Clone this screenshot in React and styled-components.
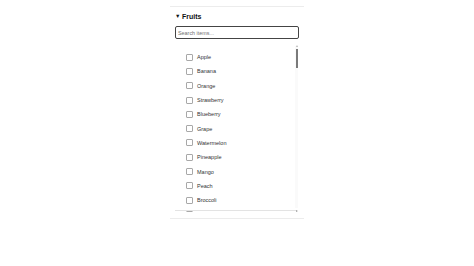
import React from "react";
import styled, { createGlobalStyle } from "styled-components";

const Global = createGlobalStyle`
  html, body { margin: 0; padding: 0; background: #fff; }
  body { font-family: "Liberation Sans", Arial, sans-serif; }
`;

const Page = styled.div`
  display: flex;
  justify-content: center;
  padding-top: 6px;
`;

const Panel = styled.section`
  width: 134px;
  box-sizing: border-box;
  border-top: 1px solid #ececec;
  border-bottom: 1px solid #ececec;
  padding: 4px 5px 6px 5px;
  display: flex;
  flex-direction: column;
`;

const Header = styled.div`
  font-weight: bold;
  font-size: 7px;
  color: #111;
  display: flex;
  align-items: center;
  gap: 1.5px;
  height: 10px;
`;

const Caret = styled.span`
  font-size: 5.5px;
`;

const Search = styled.input`
  margin-top: 5px;
  box-sizing: border-box;
  width: 124px;
  height: 13px;
  border: 1px solid #444;
  border-radius: 2px;
  padding: 0 2px;
  font-family: "Liberation Sans", Arial, sans-serif;
  font-size: 5.4px;
  outline: none;
  &::placeholder { color: #6f6f6f; }
`;

const ListWrap = styled.div`
  position: relative;
  margin-top: 5px;
  width: 124px;
  height: 168px;
`;

const List = styled.ul`
  list-style: none;
  margin: 0;
  padding: 6px 0 0 11px;
  width: 100%;
  height: 100%;
  box-sizing: border-box;
  overflow: hidden;
`;

const Row = styled.li`
  display: flex;
  align-items: center;
  gap: 4px;
  height: 14.3px;
  font-size: 5.5px;
  color: #333;
  white-space: nowrap;
`;

const Box = styled.span`
  width: 5px;
  height: 5px;
  border: 1px solid #a8a8a8;
  border-radius: 1px;
  flex: none;
  background: #fff;
`;

const Track = styled.div`
  position: absolute;
  top: 2px;
  right: 1px;
  width: 3px;
  bottom: 4px;
  background: #fafafa;
`;

const Thumb = styled.div`
  position: absolute;
  top: 3px;
  left: 0.5px;
  width: 2px;
  height: 19px;
  background: #7a7a7a;
`;

const ArrowUp = styled.div`
  position: absolute;
  top: -1px;
  left: 0.5px;
  width: 0;
  height: 0;
  border-left: 1px solid transparent;
  border-right: 1px solid transparent;
  border-bottom: 2px solid #b5b5b5;
`;

const HBar = styled.div`
  position: absolute;
  left: 0;
  right: 3px;
  bottom: 1px;
  height: 1px;
  background: #e3e3e3;
`;

const ArrowRight = styled.div`
  position: absolute;
  right: 1px;
  bottom: 0.5px;
  width: 0;
  height: 0;
  border-top: 1px solid transparent;
  border-bottom: 1px solid transparent;
  border-left: 2px solid #9a9a9a;
`;

const items = [
  "Apple", "Banana", "Orange", "Strawberry", "Blueberry", "Grape", "Watermelon",
  "Pineapple", "Mango", "Peach", "Broccoli", "Carrot",
];

export default function App() {
  return (
    <>
      <Global />
      <Page>
        <Panel>
          <Header>
            <Caret>▼</Caret>
            <span>Fruits</span>
          </Header>
          <Search placeholder="Search items..." />
          <ListWrap>
            <List>
              {items.map((name) => (
                <Row key={name}>
                  <Box />
                  <span>{name}</span>
                </Row>
              ))}
            </List>
            <Track>
              <ArrowUp />
              <Thumb />
            </Track>
            <HBar />
            <ArrowRight />
          </ListWrap>
        </Panel>
      </Page>
    </>
  );
}
